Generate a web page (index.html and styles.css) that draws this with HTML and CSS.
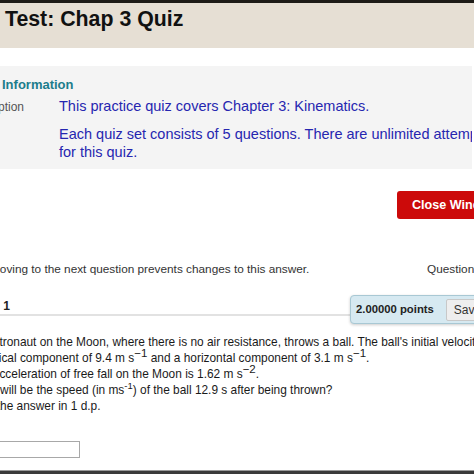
FILE: index.html
```html
<!DOCTYPE html>
<html lang="en">
<head>
<meta charset="utf-8">
<title>Test: Chap 3 Quiz</title>
<link rel="stylesheet" href="styles.css">
</head>
<body>
<div class="page">
  <div class="topbar"></div>
  <header class="titlebar">
    <h1 class="title">Test: Chap 3 Quiz</h1>
  </header>

  <section class="info">
    <h2 class="info-head">Information</h2>
    <div class="info-row">
      <div class="info-label">Description</div>
      <div class="info-value">
        <p>This practice quiz covers Chapter 3: Kinematics.</p>
        <p>Each quiz set consists of 5 questions. There are unlimited attempts<br>for this quiz.</p>
      </div>
    </div>
  </section>

  <div class="actions">
    <button class="close-btn">Close Window</button>
  </div>

  <div class="notice">
    <span class="notice-text">Moving to the next question prevents changes to this answer.</span>
    <span class="notice-count">Question 1 of 5</span>
  </div>

  <div class="qhead">
    <span class="qnum">Question 1</span>
    <div class="points">
      <span class="points-val">2.00000 points</span>
      <button class="save-btn">Save</button>
    </div>
  </div>

  <div class="qbody">
    <div class="qline">An astronaut on the Moon, where there is no air resistance, throws a ball. The ball's initial velocity has</div>
    <div class="qline">a vertical component of 9.4 m s<sup>&minus;1</sup> and a horizontal component of 3.1 m s<sup>&minus;1</sup>.</div>
    <div class="qline">The acceleration of free fall on the Moon is 1.62 m s<sup>&minus;2</sup>.</div>
    <div class="qline">What will be the speed (in ms<sup class="small">-1</sup>) of the ball 12.9 s after being thrown?</div>
    <div class="qline">Give the answer in 1 d.p.</div>
  </div>

  <div class="answer">
    <input class="answer-input" type="text" aria-label="Answer">
  </div>

  <div class="bottombar"></div>
</div>
</body>
</html>
```

FILE: styles.css
```css
html, body {
  margin: 0;
  padding: 0;
  background: #ffffff;
  overflow: hidden;
}
body {
  font-family: "Liberation Sans", Arial, sans-serif;
  color: #222;
}
.page {
  width: 474px;
  height: 474px;
  display: flex;
  flex-direction: column;
}
.topbar {
  height: 3px;
  flex: none;
  background: #1d1b17;
}
.titlebar {
  flex: none;
  background: #e6dfd4;
  height: 45px;
  box-sizing: border-box;
  padding: 4px 0 0 5px;
}
.title {
  margin: 0;
  font-size: 21.3px;
  line-height: 24px;
  font-weight: bold;
  color: #111;
  white-space: nowrap;
}
.info {
  flex: none;
  margin-top: 18px;
  width: 472px;
  height: 103px;
  box-sizing: border-box;
  background: #f4f4f4;
  padding: 11px 0 0 2px;
  overflow: hidden;
}
.info-head {
  margin: 0;
  font-size: 13px;
  line-height: 16px;
  font-weight: bold;
  color: #1c7d8c;
}
.info-row {
  display: flex;
  align-items: baseline;
  margin-top: 4px;
}
.info-label {
  margin-left: -38px;
  width: 95px;
  flex: none;
  font-size: 12px;
  color: #555;
}
.info-value {
  white-space: nowrap;
  font-size: 14.5px;
  line-height: 18px;
  color: #2626b0;
}
.info-value p {
  margin: 0 0 10px;
}
.actions {
  flex: none;
  display: flex;
  margin-top: 22px;
  padding-left: 397px;
}
.close-btn {
  flex: none;
  height: 28px;
  padding: 0 15px;
  border: none;
  border-radius: 3px;
  background: #cc0a0a;
  color: #fff;
  font-family: "Liberation Sans", Arial, sans-serif;
  font-weight: bold;
  font-size: 12.6px;
  white-space: nowrap;
}
.notice {
  flex: none;
  display: grid;
  grid-template-columns: 437px auto;
  margin-top: 43px;
  margin-left: -10px;
  font-size: 11.8px;
  line-height: 15px;
  color: #333;
  white-space: nowrap;
}
.qhead {
  flex: none;
  position: relative;
  margin-top: 22px;
  margin-left: -52px;
  border-bottom: 2px solid #e2e2e2;
  font-size: 12px;
  line-height: 15px;
  font-weight: bold;
  color: #222;
}
.points {
  position: absolute;
  left: 402px;
  top: -4px;
  width: 140px;
  height: 29px;
  box-sizing: border-box;
  display: flex;
  align-items: center;
  gap: 12px;
  padding-left: 5px;
  background: #d6e9f1;
  border: 1px solid #a8c8d4;
  border-radius: 4px;
  box-shadow: 0 1px 3px rgba(0, 0, 0, 0.2);
}
.points-val {
  font-size: 11.3px;
  font-weight: bold;
  color: #222;
  white-space: nowrap;
}
.save-btn {
  height: 22px;
  padding: 0 7px;
  background: #eeeeee;
  border: 1px solid #c8c8c8;
  border-radius: 2px;
  font-family: "Liberation Sans", Arial, sans-serif;
  font-size: 12px;
  color: #333;
}
.qbody {
  flex: none;
  margin-top: 18px;
  margin-left: -31px;
  font-size: 11.9px;
  line-height: 16px;
  color: #1a1a1a;
  white-space: nowrap;
}
.qbody sup {
  font-size: 11.5px;
  line-height: 0;
  vertical-align: 5px;
}
.qbody sup.small {
  font-size: 9.5px;
}
.answer {
  flex: none;
  margin-top: 27px;
}
.answer-input {
  display: block;
  margin: 0 0 0 -10px;
  width: 90px;
  height: 17px;
  box-sizing: border-box;
  border: 1px solid #a8a8a8;
  padding: 0;
}
.bottombar {
  flex: none;
  margin-top: auto;
  height: 4px;
  box-sizing: border-box;
  border-top: 1px solid #9a9a9a;
  background: #3a3a3a;
}
```
